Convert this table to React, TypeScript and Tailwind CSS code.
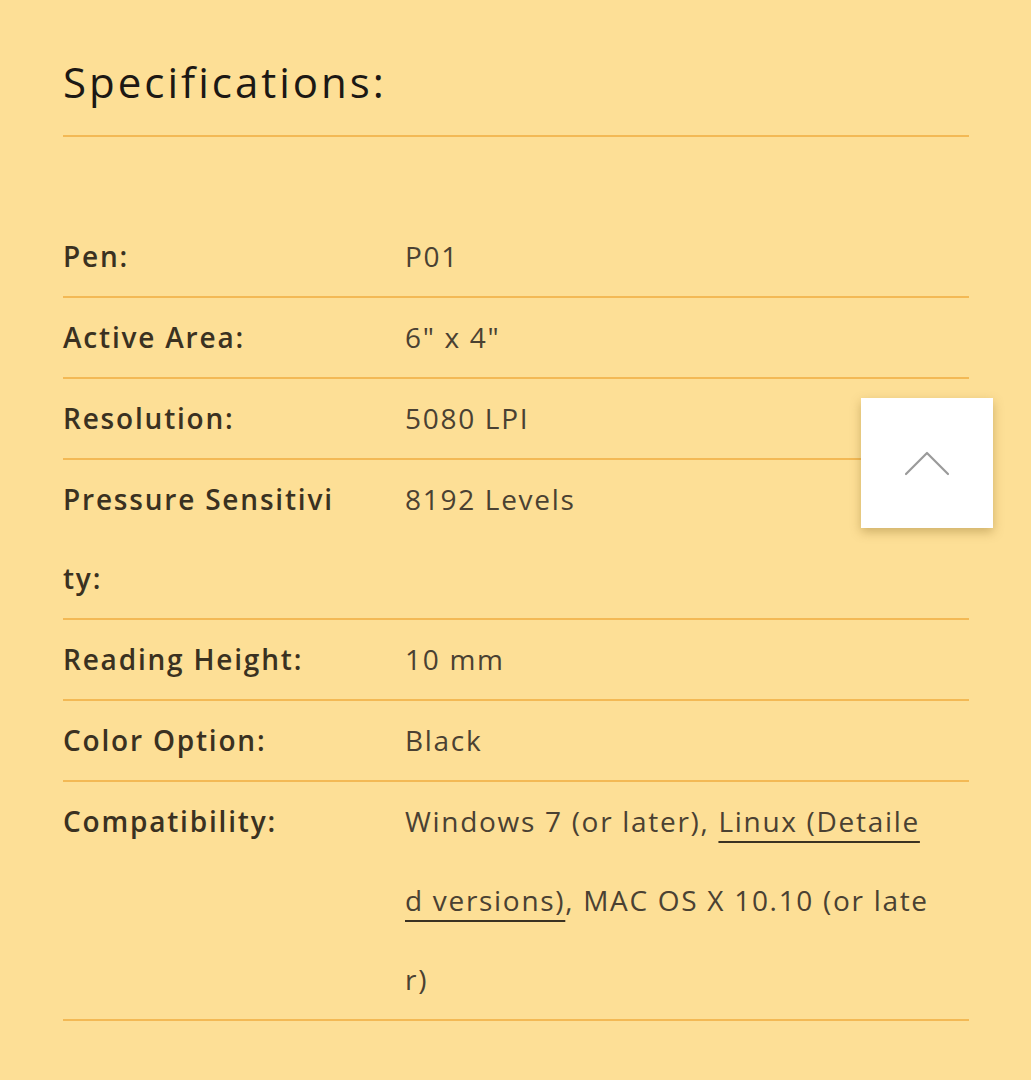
const specs: { label: string[]; value: React.ReactNode[] }[] = [
  { label: ["Pen:"], value: ["P01"] },
  { label: ["Active Area:"], value: ['6" x 4"'] },
  { label: ["Resolution:"], value: ["5080 LPI"] },
  { label: ["Pressure Sensitivi", "ty:"], value: ["8192 Levels"] },
  { label: ["Reading Height:"], value: ["10 mm"] },
  { label: ["Color Option:"], value: ["Black"] },
]

const linkCls = "underline decoration-2 underline-offset-[9px] decoration-[#3b3222]"

export default function App() {
  return (
    <div className="relative min-h-[1080px] w-full bg-[#fddf96] font-['Open_Sans',sans-serif]">
      <div className="px-[63px] w-[1032px]">
        <div className="pt-[56px] pb-[27px] border-b-2 border-[#f3b955]">
          <h2 className="text-[42px] leading-[52px] font-normal text-[#1c1814] tracking-[3px]">Specifications:</h2>
        </div>

        <div className="pt-[80px]">
          {specs.map((s, i) => (
            <div key={i} className="flex border-b-2 border-[#f3b955] text-[28px] leading-[79px]">
              <div className="w-[342px] font-semibold text-[#3a3121] tracking-[1.8px]">
                {s.label.map((l, j) => (
                  <div key={j}>{l}</div>
                ))}
              </div>
              <div className="flex-1 text-[#4a4132] tracking-[1.7px]">
                {s.value.map((v, j) => (
                  <div key={j}>{v}</div>
                ))}
              </div>
            </div>
          ))}
          <div className="flex border-b-2 border-[#f3b955] text-[28px] leading-[79px]">
            <div className="w-[342px] font-semibold text-[#3a3121] tracking-[1.8px]">Compatibility:</div>
            <div className="flex-1 text-[#4a4132] tracking-[1.7px]">
              <div>
                Windows 7 (or later), <a href="#" className={linkCls}>Linux (Detaile</a>
              </div>
              <div>
                <a href="#" className={linkCls}>d versions)</a>, MAC OS X 10.10 (or late
              </div>
              <div>r)</div>
            </div>
          </div>
        </div>
      </div>

      {/* back to top */}
      <button className="absolute left-[861px] top-[398px] w-[132px] h-[130px] bg-white shadow-[0_4px_10px_rgba(120,90,20,0.35)] flex items-center justify-center">
        <svg width="46" height="26" viewBox="0 0 46 26" fill="none">
          <path d="M2 24 L23 3 L44 24" stroke="#9a9a9a" strokeWidth="2.2" strokeLinecap="round" strokeLinejoin="round" />
        </svg>
      </button>
    </div>
  )
}
